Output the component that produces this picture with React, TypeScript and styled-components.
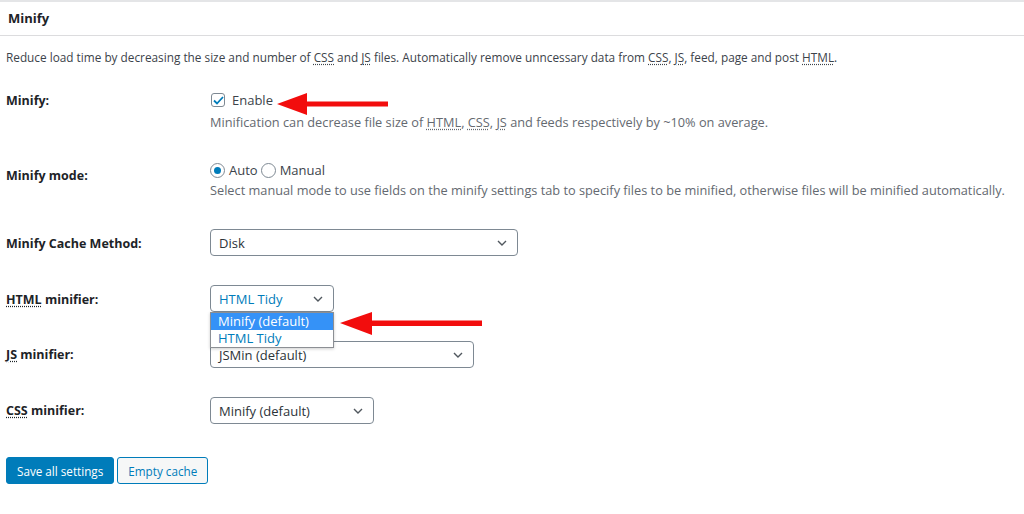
import React from "react";
import styled, { createGlobalStyle } from "styled-components";

const BLUE = "#007cba";

const GlobalStyle = createGlobalStyle`
  html, body { margin: 0; padding: 0; background: #fff; }
  body {
    font-family: "Open Sans", "Noto Sans", sans-serif;
    color: #3c434a;
    -webkit-font-smoothing: antialiased;
  }
`;

const Page = styled.div`
  position: relative;
  width: 1024px;
  height: 514px;
  overflow: hidden;
  border-top: 2px solid #e4e5e7;
  box-sizing: border-box;
`;

const Header = styled.h3`
  margin: 0;
  height: 33px;
  line-height: 33px;
  padding: 0 8px;
  font-size: 13px;
  font-weight: 700;
  color: #1d2327;
  border-bottom: 1px solid #dcdcde;
`;

const Intro = styled.p`
  margin: 11px 0 6px;
  padding: 0 6px;
  font-size: 11.8px;
  line-height: 20px;
  color: #3c434a;
  white-space: nowrap;
`;

const Abbr = styled.abbr`
  text-decoration: underline dotted;
  text-underline-offset: 2px;
  cursor: help;
`;

const Form = styled.div`
  padding: 0 6px;
`;

const Row = styled.div<{ $pad?: string }>`
  display: grid;
  grid-template-columns: 204px 1fr;
  padding: ${(p) => p.$pad ?? "14px 0 15px"};
`;

const Label = styled.div<{ $offset: number }>`
  padding-top: ${(p) => p.$offset}px;
  font-size: 12.5px;
  line-height: 20px;
  font-weight: 700;
  color: #1d2327;
`;

const Line = styled.div<{ $h: number }>`
  display: flex;
  align-items: center;
  height: ${(p) => p.$h}px;
  font-size: 13px;
  color: #3c434a;
`;

const Help = styled.div`
  font-size: 12.75px;
  line-height: 20px;
  color: #646970;
  white-space: nowrap;
`;

const Checkbox = styled.span`
  display: inline-flex;
  align-items: center;
  justify-content: center;
  width: 14px;
  height: 14px;
  box-sizing: border-box;
  border: 1px solid #7e8993;
  border-radius: 3px;
  margin-left: 1px;
  margin-right: 7px;
  background: #fff;
`;

const Radio = styled.span<{ $checked?: boolean }>`
  display: inline-flex;
  align-items: center;
  justify-content: center;
  width: 15px;
  height: 15px;
  box-sizing: border-box;
  border: 1px solid #7e8993;
  border-radius: 50%;
  margin-right: 4px;
  background: #fff;
  &::after {
    content: "";
    display: ${(p) => (p.$checked ? "block" : "none")};
    width: 7px;
    height: 7px;
    border-radius: 50%;
    background: ${BLUE};
  }
`;

const RadioText = styled.span`
  margin-right: 3px;
`;

const SelectWrap = styled.div`
  position: relative;
  display: inline-block;
`;

const SelectBox = styled.div<{ $w: number; $focus?: boolean }>`
  display: flex;
  align-items: center;
  justify-content: space-between;
  width: ${(p) => p.$w}px;
  height: 27px;
  box-sizing: border-box;
  padding: 0 10px 0 8px;
  border: 1px solid #7e8993;
  border-radius: 4px;
  background: #fff;
  font-size: 13px;
  color: ${(p) => (p.$focus ? BLUE : "#2c3338")};
`;

const Chevron = () => (
  <svg width="10" height="6" viewBox="0 0 10 6">
    <path d="M1 1l4 4 4-4" fill="none" stroke="#50575e" strokeWidth="1.4" />
  </svg>
);

const Dropdown = styled.div`
  position: absolute;
  left: 0;
  top: 27px;
  width: 124px;
  box-sizing: border-box;
  border: 1px solid #8c8f94;
  background: #fff;
  box-shadow: 0 1px 3px rgba(0, 0, 0, 0.2);
  z-index: 2;
`;

const Option = styled.div<{ $active?: boolean }>`
  height: 17px;
  line-height: 17px;
  padding: 0 7px;
  font-size: 13px;
  background: ${(p) => (p.$active ? "#3592f7" : "#fff")};
  color: ${(p) => (p.$active ? "#fff" : BLUE)};
`;

const Buttons = styled.div`
  display: flex;
  gap: 3px;
  padding: 18px 6px 0;
`;

const Button = styled.button<{ $primary?: boolean }>`
  height: 27px;
  padding: 0 10px;
  border-radius: 3px;
  font-family: inherit;
  font-size: 11.7px;
  border: 1px solid ${BLUE};
  background: ${(p) => (p.$primary ? BLUE : "#f6f7f7")};
  color: ${(p) => (p.$primary ? "#fff" : BLUE)};
`;

const Overlay = styled.svg`
  position: absolute;
  left: 0;
  top: -2px;
  pointer-events: none;
`;

export default function App() {
  return (
    <>
      <GlobalStyle />
      <Page>
        <Header>Minify</Header>
        <Intro>
          Reduce load time by decreasing the size and number of <Abbr>CSS</Abbr> and <Abbr>JS</Abbr> files.
          Automatically remove unncessary data from <Abbr>CSS</Abbr>, <Abbr>JS</Abbr>, feed, page and post{" "}
          <Abbr>HTML</Abbr>.
        </Intro>
        <Form>
          <Row $pad="15px 0 14px">
            <Label $offset={3}>Minify:</Label>
            <div>
              <Line $h={24}>
                <Checkbox>
                  <svg width="11" height="9" viewBox="0 0 11 9">
                    <path d="M1 4.5l3 3L10 1" fill="none" stroke={BLUE} strokeWidth="1.8" />
                  </svg>
                </Checkbox>
                Enable
              </Line>
              <Help>
                Minification can decrease file size of <Abbr>HTML</Abbr>, <Abbr>CSS</Abbr>, <Abbr>JS</Abbr> and
                feeds respectively by ~10% on average.
              </Help>
            </div>
          </Row>
          <Row>
            <Label $offset={6}>Minify mode:</Label>
            <div>
              <Line $h={20}>
                <Radio $checked />
                <RadioText>Auto</RadioText>
                <Radio />
                <RadioText>Manual</RadioText>
              </Line>
              <Help>
                Select manual mode to use fields on the minify settings tab to specify files to be minified,
                otherwise files will be minified automatically.
              </Help>
            </div>
          </Row>
          <Row>
            <Label $offset={5}>Minify Cache Method:</Label>
            <div>
              <SelectBox $w={308}>
                Disk
                <Chevron />
              </SelectBox>
            </div>
          </Row>
          <Row>
            <Label $offset={5}>
              <Abbr>HTML</Abbr> minifier:
            </Label>
            <div>
              <SelectWrap>
                <SelectBox $w={124} $focus>
                  HTML Tidy
                  <Chevron />
                </SelectBox>
                <Dropdown>
                  <Option $active>Minify (default)</Option>
                  <Option>HTML Tidy</Option>
                </Dropdown>
              </SelectWrap>
            </div>
          </Row>
          <Row>
            <Label $offset={4}>
              <Abbr>JS</Abbr> minifier:
            </Label>
            <div>
              <SelectBox $w={264}>
                JSMin (default)
                <Chevron />
              </SelectBox>
            </div>
          </Row>
          <Row>
            <Label $offset={4}>
              <Abbr>CSS</Abbr> minifier:
            </Label>
            <div>
              <SelectBox $w={164}>
                Minify (default)
                <Chevron />
              </SelectBox>
            </div>
          </Row>
        </Form>
        <Buttons>
          <Button $primary>Save all settings</Button>
          <Button>Empty cache</Button>
        </Buttons>
        <Overlay width="1024" height="514" viewBox="0 0 1024 514">
          <polygon
            points="277,104 307,93 307,101.5 388,101.5 388,106.5 307,106.5 307,115"
            fill="#f20d0d"
          />
          <polygon
            points="340,323 372,312 372,320.5 482,320.5 482,326 372,326 372,335"
            fill="#f20d0d"
          />
        </Overlay>
      </Page>
    </>
  );
}
